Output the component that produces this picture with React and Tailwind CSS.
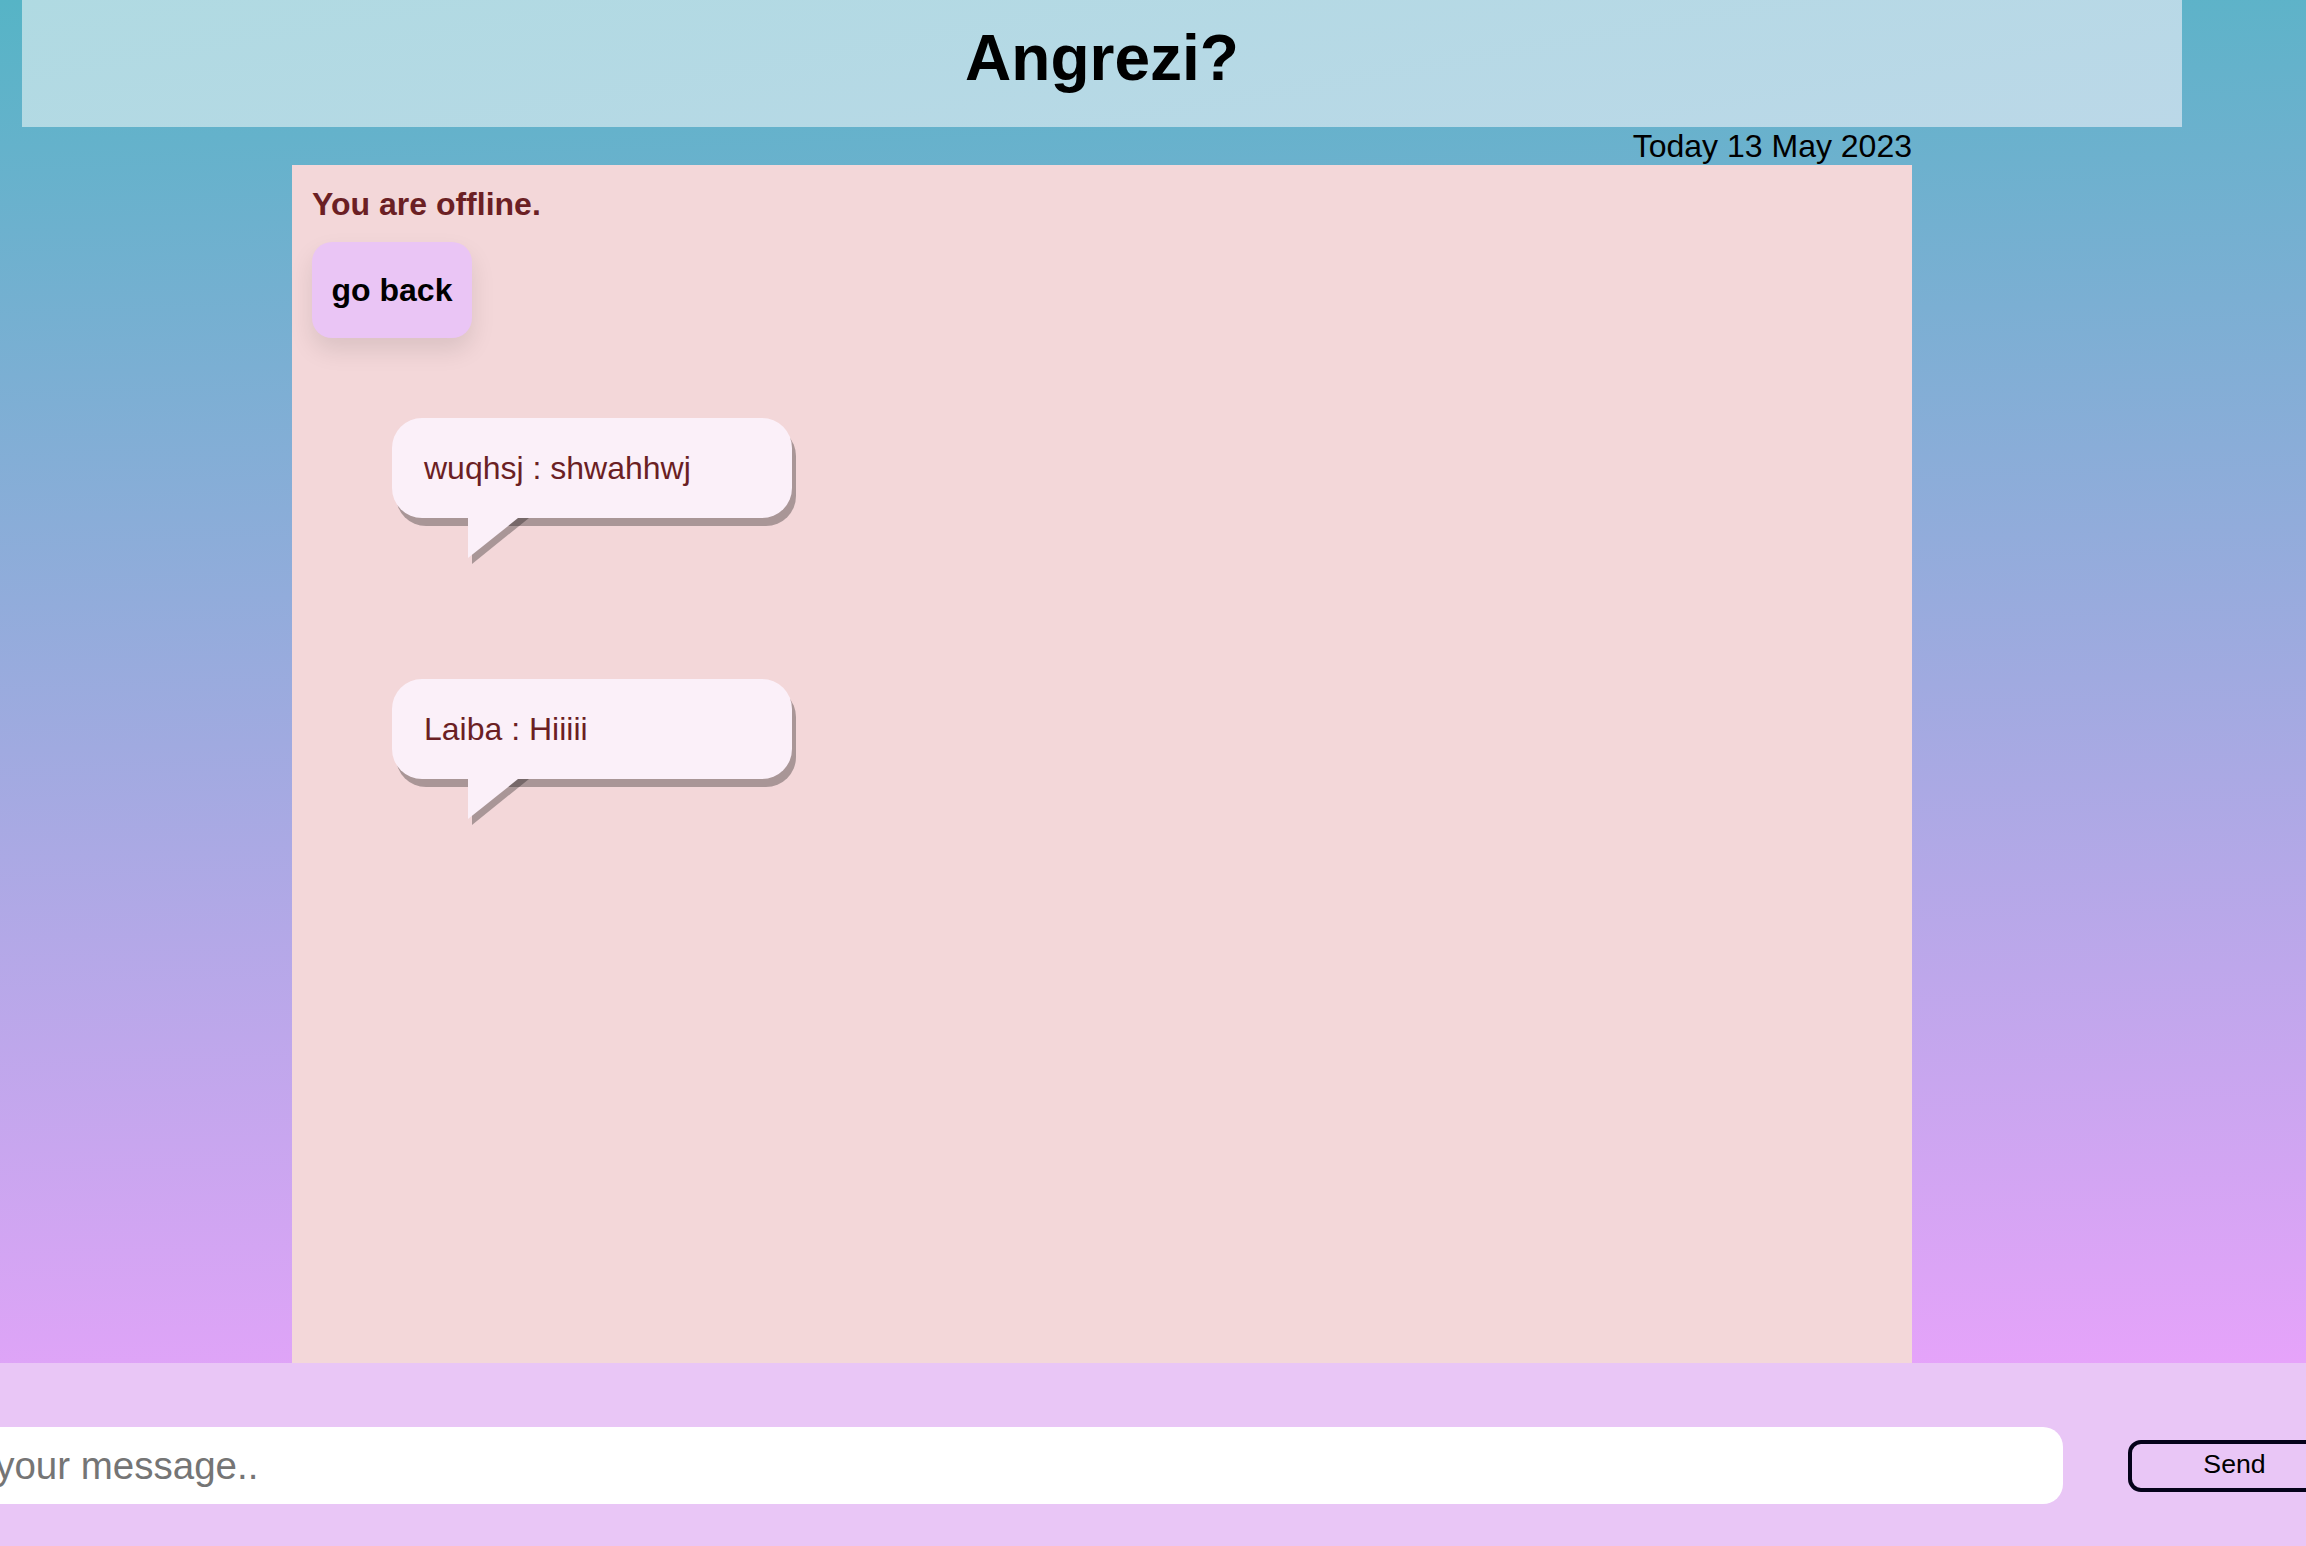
import React from "react";

function Bubble({ text }) {
  return (
    <div className="relative w-[400px] h-[100px] ml-[80px]">
      <div className="w-full h-full rounded-[30px] bg-[#fbf0f9] shadow-[4px_8px_0_rgba(0,0,0,0.3)] flex items-center pl-[32px] text-[32px] leading-[37px] text-[#6b1f24]">
        {text}
      </div>
      <svg
        className="absolute left-0 top-[100px] overflow-visible"
        width="160"
        height="60"
        viewBox="0 0 160 60"
      >
        <polygon points="80,0 137,0 80,46" fill="rgba(0,0,0,0.3)" />
        <polygon points="76,-2 128.5,-2 76,40" fill="#fbf0f9" />
      </svg>
    </div>
  );
}

export default function App() {
  return (
    <div className="w-[2306px] h-[1546px] overflow-hidden flex flex-col font-['Liberation_Sans',Arial,sans-serif]">
      <div className="h-[1363px] shrink-0 bg-[linear-gradient(178deg,#56b4c6_0%,#a0aae0_52%,#e6a3fa_100%)] flex flex-col">
        <div className="w-[2204px] h-full flex flex-col">
          <header className="mx-[22px] h-[127px] shrink-0 bg-[linear-gradient(170deg,#b0dae2,#bbd8e8)] flex justify-center pt-[21px]">
            <h1 className="text-[64px] leading-[74px] font-bold text-black">Angrezi?</h1>
          </header>
          <div className="w-[1620px] mx-auto flex-1 flex flex-col">
            <div className="text-right text-[32px] leading-[38px] text-black">Today 13 May 2023</div>
            <div className="flex-1 bg-[#f3d7d9] px-[20px] pt-[21px] flex flex-col items-start">
              <div className="text-[32px] leading-[37px] font-bold text-[#6b1f24]">You are offline.</div>
              <button className="mt-[19px] w-[160px] h-[96px] rounded-[20px] bg-[#eac5f5] shadow-[0_12px_24px_rgba(0,0,0,0.1)] flex items-center justify-center text-[32px] leading-[37px] font-bold text-black">
                go back
              </button>
              <div className="mt-[80px]">
                <Bubble text="wuqhsj : shwahhwj" />
              </div>
              <div className="mt-[161px]">
                <Bubble text="Laiba : Hiiiii" />
              </div>
            </div>
          </div>
        </div>
      </div>
      <div className="h-[183px] shrink-0 bg-[#e9c6f6] flex items-center pt-[64px] pb-[42px]">
        <input
          type="text"
          placeholder="Type your message.."
          className="ml-[-124px] w-[2187px] h-[77px] shrink-0 bg-white rounded-[20px] pl-[25px] text-[38.5px] text-black placeholder:text-[#757575] outline-none border-0"
        />
        <button className="ml-[65px] w-[213px] h-[52px] shrink-0 border-[4px] border-[#05021a] rounded-[13px] bg-transparent text-[26.67px] leading-[30px] text-black flex items-center justify-center pb-[4px]">
          Send
        </button>
      </div>
    </div>
  );
}
